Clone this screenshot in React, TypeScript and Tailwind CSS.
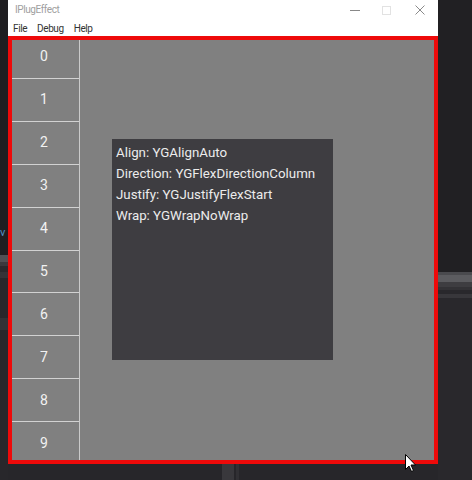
import React from "react";

const rows = ["0", "1", "2", "3", "4", "5", "6", "7", "8", "9"];

export default function App() {
  return (
    <div className="relative w-[472px] h-[480px] bg-[#252428] flex overflow-hidden font-['Roboto',sans-serif]">
      {/* left strip */}
      <div className="w-[8px] h-full flex flex-col bg-[#1f1e21]">
        <div className="h-[226px]" />
        <div className="h-[14px] text-[11px] leading-[14px] text-[#4d8fc4] whitespace-nowrap">v</div>
        <div className="h-[15px]" />
        <div className="h-[7px] bg-[#505054]" />
        <div className="h-[4px] bg-[#3a393d]" />
        <div className="h-[6px] bg-[#2a292d]" />
        <div className="h-[6px] bg-[#343337]" />
        <div className="h-[40px] bg-[#28272b]" />
        <div className="h-[12px] bg-[#333236]" />
        <div className="flex-1 bg-[#28272b]" />
      </div>

      {/* window column */}
      <div className="w-[430px] flex flex-col">
        <div className="h-[36px] bg-white flex flex-col">
          <div className="h-[20px] flex items-center pl-[7px] pr-[12px]">
            <span className="text-[10px] tracking-[-0.4px] text-[#a0a0a0] leading-none">IPlugEffect</span>
            <div className="flex-1" />
            <div className="w-[10px] h-[1px] bg-[#888] mr-[22px]" />
            <div className="w-[9px] h-[9px] border border-[#e2e2e2] mr-[24px]" />
            <svg width="10" height="10" viewBox="0 0 10 10" className="mr-[1px]">
              <path d="M0.5 0.5L9.5 9.5M9.5 0.5L0.5 9.5" stroke="#8a8a8a" strokeWidth="1" />
            </svg>
          </div>
          <div className="h-[16px] flex items-start pl-[5px] pt-[3px] gap-[10px] text-[10px] tracking-[-0.4px] leading-[12px] text-[#333]">
            <span>File</span>
            <span>Debug</span>
            <span>Help</span>
          </div>
        </div>

        <div className="h-[428px] bg-[#808080] flex outline-4 outline-[#ee0a0a] -outline-offset-4">
          <div className="w-[72px] flex flex-col border-r border-[#cacaca]">
            {rows.map((r, i) => (
              <div
                key={r}
                className={
                  i === 0
                    ? "flex-1 flex items-center justify-center pl-[1px] text-[14px] text-[#f2f2f2]"
                    : "flex-1 flex items-center justify-center pl-[1px] text-[14px] text-[#f2f2f2] border-t border-[#d2d2d2]"
                }
              >
                {r}
              </div>
            ))}
          </div>
          <div className="flex-1 pl-[32px] pt-[103px]">
            <div className="w-[221px] h-[221px] bg-[#3e3d41] pl-[4px] pt-[3px] text-[13.3px] leading-[21px] text-[#ececec]">
              <div>Align: YGAlignAuto</div>
              <div>Direction: YGFlexDirectionColumn</div>
              <div>Justify: YGJustifyFlexStart</div>
              <div>Wrap: YGWrapNoWrap</div>
            </div>
          </div>
        </div>

        <div className="flex-1 flex bg-[#27262a]">
          <div className="w-[214px]" />
          <div className="w-[12px] bg-[#39383c]" />
          <div className="w-[2px]" />
          <div className="w-[3px] bg-[#313034]" />
        </div>
      </div>

      {/* right strip */}
      <div className="flex-1 h-full flex flex-col bg-[#212023]">
        <div className="h-[272px]" />
        <div className="h-[3px] bg-[#4a4a4e]" />
        <div className="h-[7px] bg-[#5c5c60]" />
        <div className="h-[5px] bg-[#3e3d41]" />
        <div className="h-[3px] bg-[#333236]" />
        <div className="h-[4px] bg-[#29282c]" />
        <div className="h-[4px] bg-[#38373b]" />
        <div className="flex-1 bg-[#29282c]" />
      </div>

      {/* mouse cursor */}
      <svg className="absolute left-[405px] top-[454px]" width="12" height="19" viewBox="0 0 12 19">
        <path d="M0.5 0.5L0.5 15.5L4 12L6.5 17.5L8.5 16.5L6 11L10.5 11Z" fill="#fff" stroke="#000" strokeWidth="1" />
      </svg>
    </div>
  );
}
